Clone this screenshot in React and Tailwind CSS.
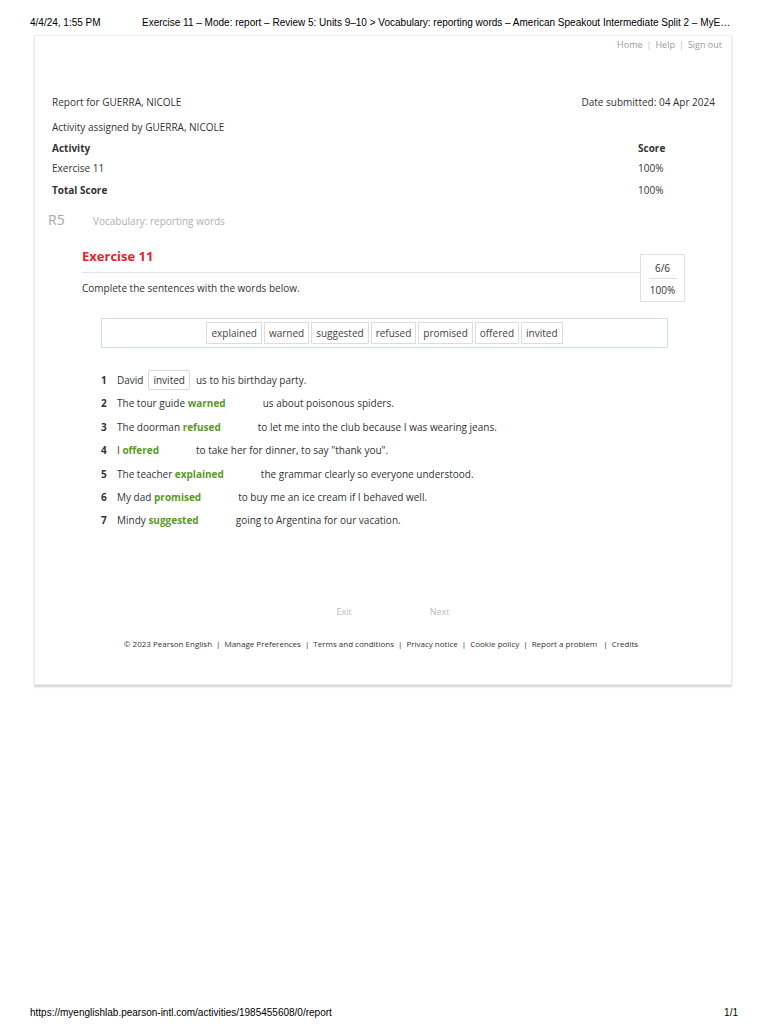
import React from 'react';

const words = ["explained", "warned", "suggested", "refused", "promised", "offered", "invited"];

const sentences = [
  { before: "The tour guide", answer: "warned", after: "us about poisonous spiders." },
  { before: "The doorman", answer: "refused", after: "to let me into the club because I was wearing jeans." },
  { before: "I", answer: "offered", after: "to take her for dinner, to say \"thank you\"." },
  { before: "The teacher", answer: "explained", after: "the grammar clearly so everyone understood." },
  { before: "My dad", answer: "promised", after: "to buy me an ice cream if I behaved well." },
  { before: "Mindy", answer: "suggested", after: "going to Argentina for our vacation." },
];

const footerLinks = ["Manage Preferences", "Terms and conditions", "Privacy notice", "Cookie policy", "Report a problem "];

export default function App() {
  return (
    <div className="w-[768px] h-[1024px] bg-white relative" style={{ fontFamily: '"Open Sans", sans-serif' }}>
      {/* print header */}
      <div className="flex h-[35px] items-start pt-[17px] pl-[30px] text-[10px] text-black leading-[12px]" style={{ fontFamily: '"Liberation Sans", Arial, sans-serif' }}>
        <span className="w-[112px] shrink-0">4/4/24, 1:55 PM</span>
        <span className="whitespace-nowrap overflow-hidden">Exercise 11 – Mode: report – Review 5: Units 9–10 &gt; Vocabulary: reporting words – American Speakout Intermediate Split 2 – MyE…</span>
      </div>

      {/* card */}
      <div className="ml-[34px] w-[698px] h-[650px] border border-[#ececec] shadow-[0_2px_2px_rgba(0,0,0,0.18)] text-[#333] text-[10px]">
        <div className="flex justify-end pr-[9px] pt-[2px] text-[#9a9a9a] text-[9px] leading-[14px]">
          <span>Home</span><span className="px-[4px] text-[#bbb]">|</span>
          <span>Help</span><span className="px-[4px] text-[#bbb]">|</span>
          <span>Sign out</span>
        </div>

        <div className="pl-[17px] pr-[16px] mt-[43px]">
          <div className="flex justify-between leading-[14px]">
            <span>Report for GUERRA, NICOLE</span>
            <span>Date submitted: 04 Apr 2024</span>
          </div>
          <div className="mt-[11px] leading-[14px]">Activity assigned by GUERRA, NICOLE</div>
          <div className="grid grid-cols-[586px_1fr] mt-[7px] leading-[14px]">
            <span className="font-bold">Activity</span>
            <span className="font-bold">Score</span>
            <span className="mt-[6px]">Exercise 11</span>
            <span className="mt-[6px]">100%</span>
            <span className="mt-[8px] font-bold">Total Score</span>
            <span className="mt-[8px]">100%</span>
          </div>
        </div>

        <div className="flex items-baseline pl-[13px] mt-[14px]">
          <span className="text-[14px] text-[#a8a8a8] w-[45px] leading-[18px]">R5</span>
          <span className="text-[#b0b0b0] text-[10px]">Vocabulary: reporting words</span>
        </div>

        <div className="pl-[47px] pr-[46px] mt-[14px]">
          <div className="flex items-start">
            <div className="flex-1">
              <div className="text-[13px] font-bold text-[#e4222a] leading-[18px] mt-[4px]">Exercise 11</div>
              <div className="border-b border-[#dde3e8] mt-[7px]"></div>
              <div className="mt-[8px] leading-[14px]">Complete the sentences with the words below.</div>
            </div>
            <div className="w-[45px] h-[48px] mt-[11px] border border-[#e0e0e0] flex flex-col items-center text-[10px] leading-[14px]">
              <span className="mt-[6px]">6/6</span>
              <span className="w-[28px] border-b border-[#ddd] mt-[3px]"></span>
              <span className="mt-[4px]">100%</span>
            </div>
          </div>

          <div className="ml-[19px] mr-[17px] mt-[16px] h-[30px] border border-[#cfdde6] flex items-center justify-center gap-[2px]">
            {words.map((w) => (
              <span key={w} className="px-[4px] h-[22px] flex items-center border border-[#ddd] text-[10px] text-[#444]">{w}</span>
            ))}
          </div>

          <div className="ml-[19px] mt-[25px] flex flex-col gap-[9.4px] leading-[14px]">
            <div className="flex items-center h-[14px]">
              <span className="w-[16px] font-bold">1</span>
              <span>David</span>
              <span className="ml-[5px] mr-[6px] h-[20px] px-[4px] flex items-center border border-[#d8d8d8] rounded-[2px]">invited</span>
              <span>us to his birthday party.</span>
            </div>
            {sentences.map((s, i) => (
              <div key={i} className="flex items-center h-[14px]">
                <span className="w-[16px] font-bold">{i + 2}</span>
                <span>{s.before}&nbsp;</span>
                <span className="font-bold text-[#5a9a2a] pr-[37px]">{s.answer}</span>
                <span>{s.after}</span>
              </div>
            ))}
          </div>
        </div>

        <div className="flex justify-center gap-[78px] mt-[78px] text-[9px] text-[#bbb] pl-[20px]">
          <span>Exit</span>
          <span>Next</span>
        </div>

        <div className="flex justify-center mt-[19px] text-[8px] text-[#333] pr-[4px]">
          <span>© 2023 Pearson English</span>
          {footerLinks.map((l) => (
            <React.Fragment key={l}>
              <span className="px-[4px]">|</span>
              <span className="whitespace-pre">{l}</span>
            </React.Fragment>
          ))}
          <span className="px-[4px]">|</span>
          <span>Credits</span>
        </div>
      </div>

      {/* print footer */}
      <div className="absolute left-0 right-0 top-[1005px] flex justify-between pl-[30px] pr-[30px] text-[10px] text-black" style={{ fontFamily: '"Liberation Sans", Arial, sans-serif' }}>
        <span>https://myenglishlab.pearson-intl.com/activities/1985455608/0/report</span>
        <span>1/1</span>
      </div>
    </div>
  );
}
